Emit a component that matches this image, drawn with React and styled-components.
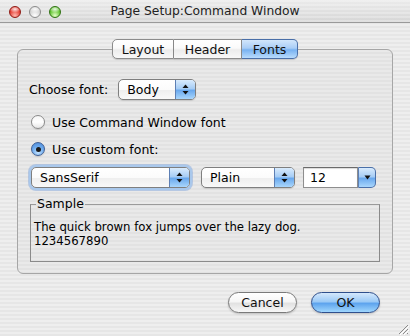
import React from "react";
import styled, { createGlobalStyle, css } from "styled-components";

const GlobalStyle = createGlobalStyle`
  html, body {
    margin: 0;
    padding: 0;
    background: #ececec;
  }
  body {
    font-family: "Lucida Grande", "DejaVu Sans", sans-serif;
    font-size: 12.5px;
    color: #000;
  }
`;

const stripes = css`
  background: repeating-linear-gradient(
    to bottom,
    #eeeeee 0px,
    #eeeeee 2px,
    #e6e6e6 2px,
    #e6e6e6 4px
  );
`;

const Window = styled.div`
  width: 410px;
  height: 336px;
  display: flex;
  flex-direction: column;
  position: relative;
  overflow: hidden;
  ${stripes}
`;

const TitleBar = styled.div`
  height: 22px;
  flex: none;
  display: grid;
  grid-template-columns: 80px 1fr 80px;
  align-items: center;
  border-bottom: 1px solid #9a9a9a;
  background: repeating-linear-gradient(
      to bottom,
      rgba(255, 255, 255, 0.25) 0px,
      rgba(255, 255, 255, 0.25) 2px,
      rgba(0, 0, 0, 0) 2px,
      rgba(0, 0, 0, 0) 4px
    ),
    linear-gradient(to bottom, #ebebeb, #d6d6d6);
`;

const Lights = styled.div`
  display: flex;
  gap: 8px;
  padding-left: 9px;
  padding-top: 1px;
`;

const lightColors = {
  red: ["#ffb7ae", "#e2382e", "#8f1a14"],
  grey: ["#ffffff", "#d2d2d2", "#8c8c8c"],
  green: ["#e4ffc8", "#5cc12a", "#2f7112"],
};

const Light = styled.span`
  width: 12px;
  height: 12px;
  border-radius: 50%;
  display: block;
  border: 1px solid ${(p) => lightColors[p.$c][2]};
  box-sizing: border-box;
  background: radial-gradient(
      ellipse 60% 35% at 50% 22%,
      rgba(255, 255, 255, 0.9),
      rgba(255, 255, 255, 0) 100%
    ),
    radial-gradient(
      circle at 50% 85%,
      ${(p) => lightColors[p.$c][0]} 0%,
      ${(p) => lightColors[p.$c][1]} 60%
    );
`;

const Title = styled.div`
  text-align: center;
  font-size: 12.3px;
  color: #222;
  white-space: nowrap;
`;

const Body = styled.div`
  flex: 1;
  display: flex;
  flex-direction: column;
  padding: 16px 17px 0;
`;

const TabRow = styled.div`
  display: flex;
  justify-content: center;
  position: relative;
  z-index: 1;
  height: 20px;
`;

const Tab = styled.div`
  height: 20px;
  box-sizing: border-box;
  width: ${(p) => p.$w}px;
  display: flex;
  align-items: center;
  justify-content: center;
  font-size: 12.5px;
  color: #111;
  border: 1px solid #8c8c8c;
  border-left: none;
  background: linear-gradient(to bottom, #ffffff 0%, #fafafa 45%, #ececec 55%, #f8f8f8 100%);
  box-shadow: 0 1px 1px rgba(0, 0, 0, 0.15);

  &:first-child {
    border-left: 1px solid #8c8c8c;
    border-radius: 5px 0 0 5px;
  }
  &:last-child {
    border-radius: 0 5px 5px 0;
  }

  ${(p) =>
    p.$active &&
    css`
      border-color: #4a6fa8;
      background: linear-gradient(
        to bottom,
        #d2e6fb 0%,
        #a9cdf6 45%,
        #78b2f1 55%,
        #b9dcfd 100%
      );
    `}
`;

const TabBox = styled.div`
  margin-top: -10px;
  height: 225px;
  box-sizing: border-box;
  border: 1px solid #a6a6a6;
  border-radius: 6px;
  padding: 29px 11px 0;
  display: flex;
  flex-direction: column;
  background: repeating-linear-gradient(
    to bottom,
    #e9e9e9 0px,
    #e9e9e9 2px,
    #e2e2e2 2px,
    #e2e2e2 4px
  );
`;

const Row = styled.div`
  display: flex;
  align-items: center;
  height: ${(p) => p.$h || 22}px;
  margin-top: ${(p) => p.$mt || 0}px;
  padding-left: ${(p) => p.$pl || 0}px;
  gap: ${(p) => p.$gap || 0}px;
`;

const Label = styled.span`
  white-space: nowrap;
`;

const PopupWrap = styled.div`
  width: ${(p) => p.$w}px;
  height: 21px;
  box-sizing: border-box;
  display: flex;
  border: 1px solid #7f7f7f;
  border-radius: 5px;
  overflow: hidden;
  box-shadow: ${(p) =>
    p.$focus
      ? "0 0 0 2px #a9c8ec, 0 0 0 3px rgba(120,160,220,0.45)"
      : "0 1px 1px rgba(0,0,0,0.12)"};
  background: linear-gradient(to bottom, #ffffff 0%, #fbfbfb 50%, #efefef 55%, #f9f9f9 100%);
`;

const PopupText = styled.div`
  flex: 1;
  padding-left: 8px;
  display: flex;
  align-items: center;
  font-size: 12.5px;
  white-space: nowrap;
`;

const blueGloss = css`
  background: linear-gradient(
    to bottom,
    #d9ebfd 0%,
    #a7cdf5 45%,
    #6aa9ee 55%,
    #a9d6fc 100%
  );
`;

const ArrowBox = styled.div`
  width: ${(p) => p.$w || 19}px;
  flex: none;
  border-left: 1px solid #5d7fb4;
  display: flex;
  align-items: center;
  justify-content: center;
  ${blueGloss}
`;

function UpDown() {
  return (
    <svg width="7" height="11" viewBox="0 0 7 11">
      <path d="M3.5 0.5 L6.5 4 L0.5 4 Z" fill="#111" />
      <path d="M3.5 10.5 L6.5 7 L0.5 7 Z" fill="#111" />
    </svg>
  );
}

function Down() {
  return (
    <svg width="7" height="5" viewBox="0 0 7 5">
      <path d="M0.5 0.5 L6.5 0.5 L3.5 4.5 Z" fill="#111" />
    </svg>
  );
}

function Popup({ w, value, focus }) {
  return (
    <PopupWrap $w={w} $focus={focus}>
      <PopupText>{value}</PopupText>
      <ArrowBox>
        <UpDown />
      </ArrowBox>
    </PopupWrap>
  );
}

const Combo = styled.div`
  width: 73px;
  height: 21px;
  display: flex;
  box-sizing: border-box;
`;

const ComboField = styled.div`
  flex: 1;
  box-sizing: border-box;
  background: #fff;
  border: 1px solid #8e8e8e;
  border-top-color: #6a6a6a;
  box-shadow: inset 0 1px 1px rgba(0, 0, 0, 0.15);
  display: flex;
  align-items: center;
  padding-left: 6px;
  font-size: 12.5px;
`;

const ComboButton = styled.div`
  width: 18px;
  box-sizing: border-box;
  border: 1px solid #4a6fa8;
  border-left-color: #5d7fb4;
  border-radius: 0 5px 5px 0;
  display: flex;
  align-items: center;
  justify-content: center;
  ${blueGloss}
`;

const Radio = styled.span`
  width: 14px;
  height: 14px;
  box-sizing: border-box;
  border-radius: 50%;
  flex: none;
  margin-right: 7px;
  display: flex;
  align-items: center;
  justify-content: center;
  border: 1px solid ${(p) => (p.$on ? "#3f5f94" : "#8a8a8a")};
  background: ${(p) =>
    p.$on
      ? "radial-gradient(circle at 50% 80%, #c2e2ff 0%, #6aa8ec 55%, #4a86d4 100%)"
      : "linear-gradient(to bottom, #f6f6f6 0%, #ffffff 50%, #e6e6e6 100%)"};
  box-shadow: 0 1px 1px rgba(0, 0, 0, 0.12);

  &::after {
    content: "";
    display: ${(p) => (p.$on ? "block" : "none")};
    width: 5px;
    height: 5px;
    border-radius: 50%;
    background: #1a1a1a;
  }
`;

const Group = styled.fieldset`
  margin: 9px 1px 0 1px;
  padding: 0 3px 0 3px;
  height: 65px;
  box-sizing: border-box;
  border: 1px solid #8a8a8a;
  border-top-color: #9a9a9a;
  min-width: 0;
`;

const Legend = styled.legend`
  padding: 0 1px;
  margin-left: 2px;
  font-size: 12.5px;
  line-height: 14px;
`;

const SampleText = styled.div`
  font-size: 11.7px;
  line-height: 14px;
  margin-top: 9px;
  white-space: nowrap;
`;

const ButtonRow = styled.div`
  display: flex;
  justify-content: flex-end;
  gap: 14px;
  padding: 18px 13px 0 0;
`;

const Button = styled.div`
  width: 69px;
  height: 21px;
  box-sizing: border-box;
  border-radius: 11px;
  display: flex;
  align-items: center;
  justify-content: center;
  font-size: 12.5px;
  color: #111;
  border: 1px solid #7a7a7a;
  box-shadow: 0 1px 2px rgba(0, 0, 0, 0.2);
  background: linear-gradient(
    to bottom,
    #ffffff 0%,
    #f6f6f6 45%,
    #e2e2e2 55%,
    #f7f7f7 100%
  );

  ${(p) =>
    p.$primary &&
    css`
      border-color: #2f4f8c;
      background: linear-gradient(
        to bottom,
        #d4e8fc 0%,
        #9ccaf6 45%,
        #5ea4ee 55%,
        #9fd6fd 100%
      );
    `}
`;

const Grip = styled.svg`
  position: absolute;
  right: 1px;
  bottom: 1px;
`;

export default function App() {
  return (
    <>
      <GlobalStyle />
      <Window>
        <TitleBar>
          <Lights>
            <Light $c="red" />
            <Light $c="grey" />
            <Light $c="green" />
          </Lights>
          <Title>Page Setup:Command Window</Title>
          <div />
        </TitleBar>
        <Body>
          <TabRow>
            <Tab $w={62}>Layout</Tab>
            <Tab $w={68}>Header</Tab>
            <Tab $w={56} $active>
              Fonts
            </Tab>
          </TabRow>
          <TabBox>
            <Row $h={21} $gap={10} $pl={0}>
              <Label>Choose font:</Label>
              <Popup w={78} value="Body" />
            </Row>
            <Row $mt={11} $pl={2}>
              <Radio />
              <Label>Use Command Window font</Label>
            </Row>
            <Row $mt={5} $pl={2}>
              <Radio $on />
              <Label>Use custom font:</Label>
            </Row>
            <Row $h={21} $mt={7} $pl={2}>
              <Popup w={159} value="SansSerif" focus />
              <div style={{ width: 11 }} />
              <Popup w={94} value="Plain" />
              <div style={{ width: 8 }} />
              <Combo>
                <ComboField>12</ComboField>
                <ComboButton>
                  <Down />
                </ComboButton>
              </Combo>
            </Row>
            <Group>
              <Legend>Sample</Legend>
              <SampleText>
                The quick brown fox jumps over the lazy dog.
                <br />
                1234567890
              </SampleText>
            </Group>
          </TabBox>
          <ButtonRow>
            <Button>Cancel</Button>
            <Button $primary>OK</Button>
          </ButtonRow>
        </Body>
        <Grip width="12" height="12" viewBox="0 0 12 12">
          <path d="M11 2 L2 11 M11 6 L6 11 M11 10 L10 11" stroke="#8a8a8a" strokeWidth="1" />
          <path d="M12 3 L3 12 M12 7 L7 12" stroke="#ffffff" strokeWidth="1" />
        </Grip>
      </Window>
    </>
  );
}
